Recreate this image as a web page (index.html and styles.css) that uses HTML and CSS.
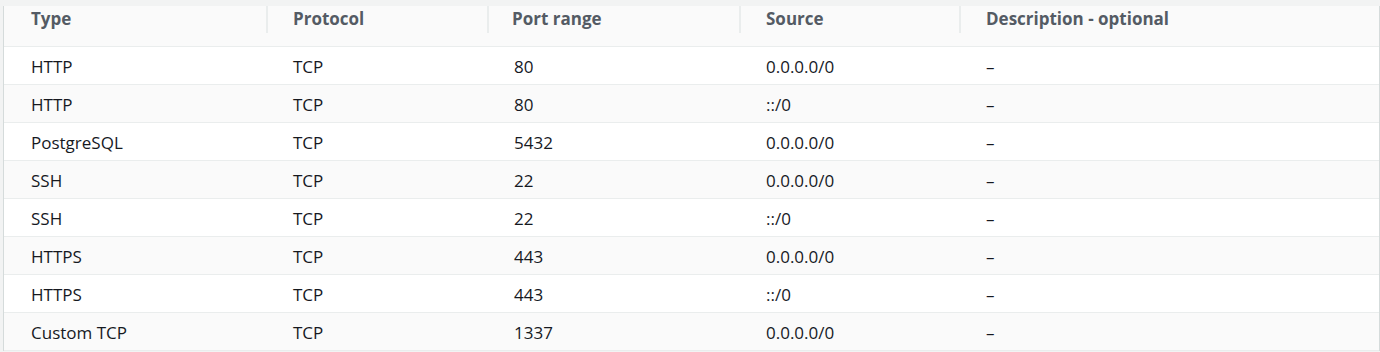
FILE: index.html
```html
<!DOCTYPE html>
<html>
<head>
<meta charset="utf-8">
<link rel="stylesheet" href="styles.css">
</head>
<body>
<div class="page">
  <div class="panel">
    <table class="rules">
      <thead>
        <tr>
          <th class="c1"><span>Type</span></th>
          <th class="c2"><span>Protocol</span></th>
          <th class="c3"><span>Port range</span></th>
          <th class="c4"><span>Source</span></th>
          <th class="c5"><span>Description - optional</span></th>
        </tr>
      </thead>
      <tbody>
        <tr><td>HTTP</td><td>TCP</td><td>80</td><td>0.0.0.0/0</td><td>–</td></tr>
        <tr><td>HTTP</td><td>TCP</td><td>80</td><td>::/0</td><td>–</td></tr>
        <tr><td>PostgreSQL</td><td>TCP</td><td>5432</td><td>0.0.0.0/0</td><td>–</td></tr>
        <tr><td>SSH</td><td>TCP</td><td>22</td><td>0.0.0.0/0</td><td>–</td></tr>
        <tr><td>SSH</td><td>TCP</td><td>22</td><td>::/0</td><td>–</td></tr>
        <tr><td>HTTPS</td><td>TCP</td><td>443</td><td>0.0.0.0/0</td><td>–</td></tr>
        <tr><td>HTTPS</td><td>TCP</td><td>443</td><td>::/0</td><td>–</td></tr>
        <tr><td>Custom TCP</td><td>TCP</td><td>1337</td><td>0.0.0.0/0</td><td>–</td></tr>
      </tbody>
    </table>
  </div>
</div>
</body>
</html>
```
FILE: styles.css
```css
html, body {
  margin: 0;
  padding: 0;
  background: #f2f3f3;
}
body {
  font-family: "Open Sans", "Noto Sans", sans-serif;
  font-size: 17px;
  color: #16191f;
}
.page {
  padding: 6px 0 0 3px;
  width: 1377px;
}
.panel {
  border-left: 1px solid #d5dbdb;
  border-right: 1px solid #d5dbdb;
  background: #ffffff;
}
.rules {
  width: 100%;
  border-collapse: collapse;
  table-layout: fixed;
}
.rules th {
  background: #fafafa;
  color: #545b64;
  font-weight: 700;
  text-align: left;
  height: 40px;
  padding: 0;
  vertical-align: top;
  border-bottom: 1px solid #eaeded;
}
.rules th span {
  display: block;
  padding: 1px 0 0 25px;
  height: 26px;
  line-height: 24px;
  border-left: 2px solid #eaeded;
}
.rules th.c1 span {
  border-left: 0;
  padding-left: 27px;
}
.rules th.c3 span {
  padding-left: 23px;
}
.c1 { width: 262px; }
.c2 { width: 221px; }
.c3 { width: 252px; }
.c4 { width: 220px; }
.rules td {
  height: 34px;
  padding: 3px 0 0 27px;
  border-bottom: 1px solid #eaeded;
  vertical-align: middle;
  line-height: 20px;
}
.rules tbody tr:nth-child(even) td {
  background: #fafafa;
}
```
